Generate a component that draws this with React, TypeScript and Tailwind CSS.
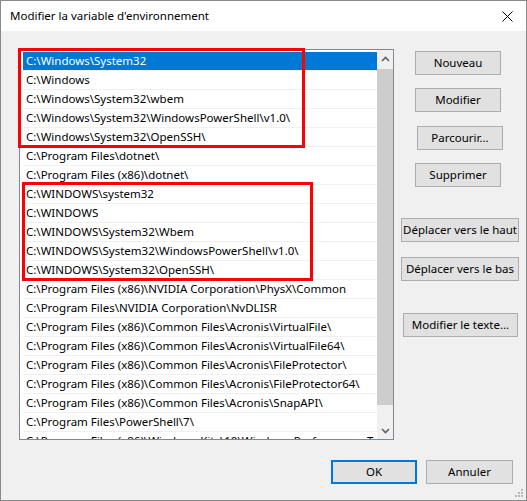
import React from "react";

const rows = [
  "C:\\Windows\\System32",
  "C:\\Windows",
  "C:\\Windows\\System32\\wbem",
  "C:\\Windows\\System32\\WindowsPowerShell\\v1.0\\",
  "C:\\Windows\\System32\\OpenSSH\\",
  "C:\\Program Files\\dotnet\\",
  "C:\\Program Files (x86)\\dotnet\\",
  "C:\\WINDOWS\\system32",
  "C:\\WINDOWS",
  "C:\\WINDOWS\\System32\\Wbem",
  "C:\\WINDOWS\\System32\\WindowsPowerShell\\v1.0\\",
  "C:\\WINDOWS\\System32\\OpenSSH\\",
  "C:\\Program Files (x86)\\NVIDIA Corporation\\PhysX\\Common",
  "C:\\Program Files\\NVIDIA Corporation\\NvDLISR",
  "C:\\Program Files (x86)\\Common Files\\Acronis\\VirtualFile\\",
  "C:\\Program Files (x86)\\Common Files\\Acronis\\VirtualFile64\\",
  "C:\\Program Files (x86)\\Common Files\\Acronis\\FileProtector\\",
  "C:\\Program Files (x86)\\Common Files\\Acronis\\FileProtector64\\",
  "C:\\Program Files (x86)\\Common Files\\Acronis\\SnapAPI\\",
  "C:\\Program Files\\PowerShell\\7\\",
  "C:\\Program Files (x86)\\Windows Kits\\10\\Windows Performance Toolkit\\",
];

function Btn({ children, className }: { children: React.ReactNode; className: string }) {
  return (
    <div
      className={
        "flex h-[24px] items-center justify-center whitespace-nowrap border border-[#adadad] bg-[#e1e1e1] text-[11.5px] text-black " +
        className
      }
    >
      {children}
    </div>
  );
}

export default function App() {
  return (
    <div
      className="relative flex h-[501px] w-[527px] flex-col border border-[#8a8a8a] bg-[#f0f0f0] text-black"
      style={{ fontFamily: '"Noto Sans", "Segoe UI", sans-serif' }}
    >
      {/* Title bar */}
      <div className="flex h-[30px] items-center justify-between bg-white pl-[9px] pr-[13px]">
        <span className="text-[11.5px]">Modifier la variable d'environnement</span>
        <svg width="11" height="11" viewBox="0 0 11 11">
          <path d="M0.5 0.5 L10.5 10.5 M10.5 0.5 L0.5 10.5" stroke="#000" strokeWidth="1" />
        </svg>
      </div>

      {/* Body */}
      <div className="flex">
        {/* List */}
        <div className="ml-[18px] mt-[18px] flex h-[391px] w-[375px] border border-[#828790] bg-white">
          <div className="flex-1 overflow-hidden pl-[3px] pt-[2px]">
            {rows.map((r, i) => (
              <div
                key={i}
                className={
                  "h-[19px] whitespace-nowrap border-b border-[#f0f0f0] pl-[3px] text-[11.5px] leading-[18px] " +
                  (i === 0 ? "bg-[#0078d7] text-white" : "")
                }
              >
                {r}
              </div>
            ))}
          </div>
          {/* Scrollbar */}
          <div className="flex w-[16px] flex-col bg-[#f0f0f0]">
            <div className="flex h-[17px] items-center justify-center">
              <svg width="9" height="6" viewBox="0 0 9 6">
                <path d="M1 5 L4.5 1.5 L8 5" fill="none" stroke="#606060" strokeWidth="1.6" />
              </svg>
            </div>
            <div className="mt-[2px] h-[336px] bg-[#cdcdcd]" />
            <div className="flex-1" />
            <div className="flex h-[17px] items-center justify-center">
              <svg width="9" height="6" viewBox="0 0 9 6">
                <path d="M1 1 L4.5 4.5 L8 1" fill="none" stroke="#606060" strokeWidth="1.6" />
              </svg>
            </div>
          </div>
        </div>

        {/* Right buttons */}
        <div className="flex flex-col items-start">
          <Btn className="ml-[21px] mt-[20px] w-[86px]">Nouveau</Btn>
          <Btn className="ml-[21px] mt-[13px] w-[86px]">Modifier</Btn>
          <Btn className="ml-[23px] mt-[14px] w-[86px]">Parcourir...</Btn>
          <Btn className="ml-[21px] mt-[13px] w-[86px]">Supprimer</Btn>
          <Btn className="ml-[7px] mt-[31px] w-[118px]">Déplacer vers le haut</Btn>
          <Btn className="ml-[7px] mt-[15px] w-[118px]">Déplacer vers le bas</Btn>
          <Btn className="ml-[9px] mt-[32px] w-[115px]">Modifier le texte...</Btn>
        </div>
      </div>

      {/* Bottom buttons */}
      <div className="mt-[20px] flex justify-end gap-[9px] pr-[13px]">
        <div className="flex h-[24px] w-[86px] items-center justify-center border-2 border-[#0078d7] bg-[#e1e1e1] text-[11.5px]">
          OK
        </div>
        <Btn className="w-[87px]">Annuler</Btn>
      </div>

      {/* Resize grip */}
      <svg className="absolute bottom-[2px] right-[2px]" width="10" height="10" viewBox="0 0 10 10">
        <rect x="7" y="1" width="2" height="2" fill="#b8b8b8" />
        <rect x="4" y="4" width="2" height="2" fill="#b8b8b8" />
        <rect x="7" y="4" width="2" height="2" fill="#b8b8b8" />
        <rect x="1" y="7" width="2" height="2" fill="#b8b8b8" />
        <rect x="4" y="7" width="2" height="2" fill="#b8b8b8" />
        <rect x="7" y="7" width="2" height="2" fill="#b8b8b8" />
      </svg>

      {/* Red annotation boxes */}
      <div className="pointer-events-none absolute left-[17px] top-[47px] h-[100px] w-[287px] border-[3px] border-[#ff0000]" />
      <div className="pointer-events-none absolute left-[21px] top-[181px] h-[99px] w-[291px] border-[3px] border-[#ff0000]" />
    </div>
  );
}
